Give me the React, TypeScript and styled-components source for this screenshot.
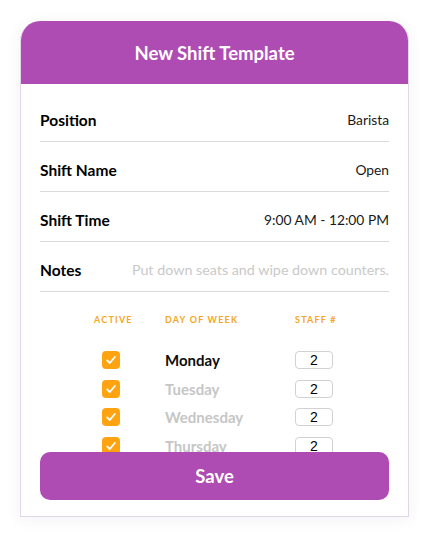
import React from 'react';
import styled, { createGlobalStyle } from 'styled-components';

const GlobalStyle = createGlobalStyle`
  html, body {
    margin: 0;
    padding: 0;
    background: #ffffff;
    font-family: Lato, "Noto Sans", sans-serif;
  }
`;

const Page = styled.div`
  width: 429px;
  height: 534px;
  padding: 21px 20px 0;
  box-sizing: border-box;
`;

const Card = styled.div`
  width: 389px;
  height: 496px;
  box-sizing: border-box;
  border: 1px solid #e0d8e6;
  border-top: none;
  border-radius: 20px 20px 0 0;
  box-shadow: 0 2px 14px rgba(90, 60, 110, 0.08);
  background: #fff;
  display: flex;
  flex-direction: column;
  overflow: hidden;
`;

const Header = styled.div`
  height: 63px;
  flex: none;
  background: #ae4cb4;
  color: #fff;
  display: flex;
  align-items: center;
  justify-content: center;
  font-size: 18.5px;
  font-weight: 700;
  margin: 0 -1px;
`;

const Body = styled.div`
  flex: 1;
  display: flex;
  flex-direction: column;
  padding: 8px 19px 16px;
  min-height: 0;
`;

const Row = styled.div`
  display: flex;
  align-items: center;
  justify-content: space-between;
  height: 50px;
  padding-top: 6px;
  box-sizing: border-box;
  border-bottom: 1px solid #d9d9d9;
`;

const Label = styled.span`
  font-size: 15.5px;
  font-weight: 700;
  color: #000;
`;

const Value = styled.span<{ $muted?: boolean }>`
  font-size: ${p => (p.$muted ? '14.3px' : '13.8px')};
  color: ${p => (p.$muted ? '#c9c9c9' : '#1a1a1a')};
`;

const Days = styled.div`
  flex: 1;
  min-height: 0;
  overflow: hidden;
`;

const Grid = styled.div`
  display: grid;
  grid-template-columns: 110px 130px 94px;
  align-items: center;
  padding-left: 15px;
`;

const HeadCell = styled.div<{ $indent?: number }>`
  font-size: 9px;
  font-weight: 700;
  letter-spacing: 1.2px;
  color: #f5a623;
  padding: 22px 0 21px ${p => p.$indent ?? 0}px;
`;

const BoxCell = styled.div`
  height: 28.5px;
  display: flex;
  align-items: center;
  padding-left: 47px;
`;

const Check = styled.div`
  width: 18px;
  height: 18px;
  border-radius: 4px;
  background: #ffa410;
  display: flex;
  align-items: center;
  justify-content: center;
`;

const DayName = styled.div<{ $active?: boolean }>`
  font-size: 15px;
  font-weight: 700;
  color: ${p => (p.$active ? '#0d0d0d' : '#c6c6c6')};
`;

const StaffCell = styled.div`
  display: flex;
  align-items: center;
`;

const StaffInput = styled.div`
  width: 38px;
  height: 18px;
  box-sizing: border-box;
  border: 1px solid #d2d2d2;
  border-radius: 4px;
  font-size: 14px;
  font-family: "Liberation Sans", Arial, sans-serif;
  color: #000;
  display: flex;
  align-items: center;
  justify-content: center;
`;

const SaveButton = styled.button`
  flex: none;
  height: 48px;
  border: none;
  border-radius: 10px;
  background: #ae4cb4;
  color: #fff;
  font-family: inherit;
  font-size: 18.5px;
  font-weight: 700;
`;

const fields = [
  { label: 'Position', value: 'Barista' },
  { label: 'Shift Name', value: 'Open' },
  { label: 'Shift Time', value: '9:00 AM - 12:00 PM' },
  { label: 'Notes', value: 'Put down seats and wipe down counters.', muted: true },
];

const days = ['Monday', 'Tuesday', 'Wednesday', 'Thursday', 'Friday', 'Saturday', 'Sunday'];

const Tick = () => (
  <svg width="12" height="12" viewBox="0 0 12 12" fill="none">
    <path d="M2.2 6.4 L4.8 9 L9.8 3" stroke="#fff" strokeWidth="1.8" strokeLinecap="round" strokeLinejoin="round" />
  </svg>
);

export default function App() {
  return (
    <>
      <GlobalStyle />
      <Page>
        <Card>
          <Header>New Shift Template</Header>
          <Body>
            {fields.map(f => (
              <Row key={f.label}>
                <Label>{f.label}</Label>
                <Value $muted={f.muted}>{f.value}</Value>
              </Row>
            ))}
            <Days>
              <Grid>
                <HeadCell $indent={39}>ACTIVE</HeadCell>
                <HeadCell $indent={-2}>DAY OF WEEK</HeadCell>
                <HeadCell $indent={-1}>STAFF #</HeadCell>
                {days.map((d, i) => (
                  <React.Fragment key={d}>
                    <BoxCell>
                      <Check>
                        <Tick />
                      </Check>
                    </BoxCell>
                    <DayName $active={i === 0}>{d}</DayName>
                    <StaffCell>
                      <StaffInput>2</StaffInput>
                    </StaffCell>
                  </React.Fragment>
                ))}
              </Grid>
            </Days>
            <SaveButton>Save</SaveButton>
          </Body>
        </Card>
      </Page>
    </>
  );
}
